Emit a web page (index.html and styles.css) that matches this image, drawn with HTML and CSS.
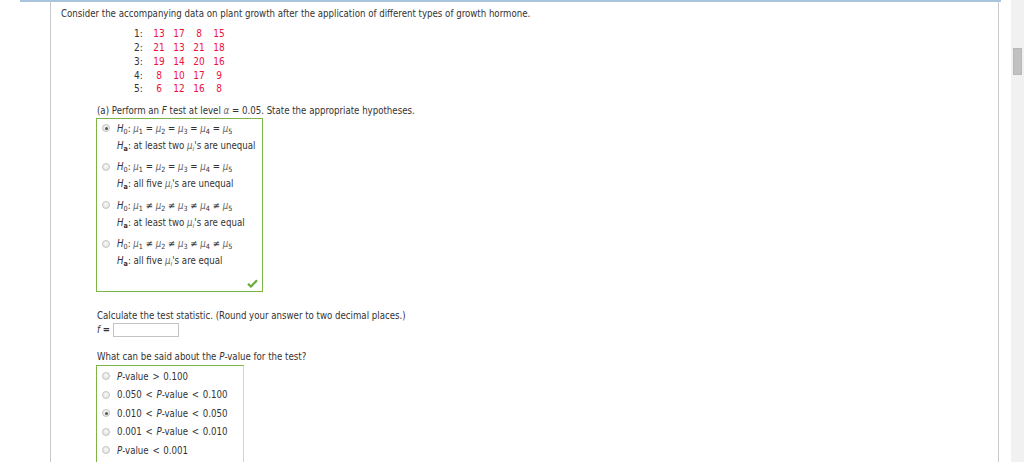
FILE: index.html
```html
<!DOCTYPE html>
<html lang="en">
<head>
  <meta charset="UTF-8" />
  <title>Plant growth ANOVA</title>
  <link rel="stylesheet" href="styles.css">
</head>
<body>

  <div class="page">
    <div class="topline"></div>
    <div class="frame">
      <p class="intro">Consider the accompanying data on plant growth after the application of different types of growth hormone.</p>

      <div class="data">
        <span class="lbl">1:</span><span>13</span><span>17</span><span>8</span><span>15</span>
        <span class="lbl">2:</span><span>21</span><span>13</span><span>21</span><span>18</span>
        <span class="lbl">3:</span><span>19</span><span>14</span><span>20</span><span>16</span>
        <span class="lbl">4:</span><span>8</span><span>10</span><span>17</span><span>9</span>
        <span class="lbl">5:</span><span>6</span><span>12</span><span>16</span><span>8</span>
      </div>

      <div class="part">
        <p class="q">(a) Perform an <i>F</i> test at level <i class="greek">α</i> = 0.05. State the appropriate hypotheses.</p>

        <div class="choices hyp">
          <div class="opt">
            <span class="radio on"></span>
            <div class="lines">
              <div><i>H</i><sub>0</sub>: <i class="mu">μ</i><sub>1</sub> = <i class="mu">μ</i><sub>2</sub> = <i class="mu">μ</i><sub>3</sub> = <i class="mu">μ</i><sub>4</sub> = <i class="mu">μ</i><sub>5</sub></div>
              <div><i>H</i><sub class="b">a</sub>: at least two <i class="mu">μ<sub>i</sub></i>'s are unequal</div>
            </div>
          </div>
          <div class="opt">
            <span class="radio"></span>
            <div class="lines">
              <div><i>H</i><sub>0</sub>: <i class="mu">μ</i><sub>1</sub> = <i class="mu">μ</i><sub>2</sub> = <i class="mu">μ</i><sub>3</sub> = <i class="mu">μ</i><sub>4</sub> = <i class="mu">μ</i><sub>5</sub></div>
              <div><i>H</i><sub class="b">a</sub>: all five <i class="mu">μ<sub>i</sub></i>'s are unequal</div>
            </div>
          </div>
          <div class="opt">
            <span class="radio"></span>
            <div class="lines">
              <div><i>H</i><sub>0</sub>: <i class="mu">μ</i><sub>1</sub> ≠ <i class="mu">μ</i><sub>2</sub> ≠ <i class="mu">μ</i><sub>3</sub> ≠ <i class="mu">μ</i><sub>4</sub> ≠ <i class="mu">μ</i><sub>5</sub></div>
              <div><i>H</i><sub class="b">a</sub>: at least two <i class="mu">μ<sub>i</sub></i>'s are equal</div>
            </div>
          </div>
          <div class="opt">
            <span class="radio"></span>
            <div class="lines">
              <div><i>H</i><sub>0</sub>: <i class="mu">μ</i><sub>1</sub> ≠ <i class="mu">μ</i><sub>2</sub> ≠ <i class="mu">μ</i><sub>3</sub> ≠ <i class="mu">μ</i><sub>4</sub> ≠ <i class="mu">μ</i><sub>5</sub></div>
              <div><i>H</i><sub class="b">a</sub>: all five <i class="mu">μ<sub>i</sub></i>'s are equal</div>
            </div>
          </div>
          <div class="mark">
            <svg width="11" height="9" viewBox="0 0 11 9"><path d="M1 4.8 L4 7.6 L10 1.2" fill="none" stroke="#6aaa3a" stroke-width="2.2" stroke-linejoin="round"/></svg>
          </div>
        </div>

        <p class="q calc">Calculate the test statistic. (Round your answer to two decimal places.)</p>
        <div class="answer"><span><i>f</i> <b>=</b></span><span class="input"></span></div>

        <p class="q pq">What can be said about the <i>P</i>-value for the test?</p>
        <div class="choices pval">
          <div class="popt"><span class="radio"></span><span><i>P</i>-value &gt; 0.100</span></div>
          <div class="popt"><span class="radio"></span><span>0.050 &lt; <i>P</i>-value &lt; 0.100</span></div>
          <div class="popt"><span class="radio on"></span><span>0.010 &lt; <i>P</i>-value &lt; 0.050</span></div>
          <div class="popt"><span class="radio"></span><span>0.001 &lt; <i>P</i>-value &lt; 0.010</span></div>
          <div class="popt"><span class="radio"></span><span><i>P</i>-value &lt; 0.001</span></div>
        </div>
      </div>
    </div>
  </div>

  <div class="scrollbar"><div class="thumb"></div></div>

</body>
</html>
```

FILE: styles.css
```css
html, body {
  height: 462px;
  overflow: hidden;
}

body {
  margin: 0;
  display: flex;
  background: #fff;
  font-family: 'DejaVu Sans Condensed', 'DejaVu Sans', sans-serif;
  font-size: 9.6px;
  color: #333;
}

.page {
  width: 1011px;
}

.topline {
  margin-left: 20px;
  width: 981px;
  height: 2px;
  background: #a9c4dc;
}

.frame {
  margin-left: 50px;
  width: 949px;
  height: 460px;
  border-left: 1px solid #cacaca;
  border-right: 1px solid #cacaca;
  padding: 5px 0 0 10px;
  box-sizing: border-box;
}

p {
  margin: 0;
}

.intro {
  line-height: 13px;
}

.data {
  display: grid;
  grid-template-columns: 15px repeat(4, 20px);
  grid-auto-rows: 13.75px;
  align-items: center;
  margin: 7px 0 0 73px;
  font-size: 10px;
  color: #f0103c;
  text-align: center;
}

.data .lbl {
  color: #333;
  text-align: left;
}

.part {
  margin: 8px 0 0 35px;
}

.q {
  line-height: 14px;
  padding-left: 1px;
}

.greek, .mu {
  color: #666;
}

sub {
  font-size: 75%;
  line-height: 0;
  vertical-align: -2px;
}

sub.b {
  font-weight: bold;
}

.mu sub {
  font-style: italic;
}

.choices {
  border: 1px solid #7cb445;
}

.hyp {
  width: 167px;
  padding-top: 1px;
  box-sizing: border-box;
}

.opt {
  display: flex;
  align-items: flex-start;
  padding-left: 5px;
  margin-bottom: 4.5px;
}

.lines div {
  line-height: 17px;
  white-space: nowrap;
}

.radio {
  width: 8px;
  height: 8px;
  box-sizing: border-box;
  border: 1px solid #c4c4c4;
  border-radius: 50%;
  background: radial-gradient(circle at 50% 40%, #fafafa, #dcdcdc);
  margin: 4.5px 7px 0 0;
  display: flex;
  align-items: center;
  justify-content: center;
  flex-shrink: 0;
}

.radio.on::after {
  content: "";
  width: 3px;
  height: 3px;
  border-radius: 50%;
  background: #555;
}

.mark {
  display: flex;
  justify-content: flex-end;
  align-items: flex-end;
  height: 14px;
  padding: 0 4px 3px 0;
}

.calc {
  margin-top: 17px;
}

.answer {
  display: flex;
  align-items: center;
  height: 14px;
  gap: 3px;
  padding-left: 1px;
}

.input {
  width: 66px;
  height: 14px;
  box-sizing: border-box;
  border: 1px solid #c3c3c3;
  background: #fff;
}

.pq {
  margin-top: 13px;
}

.pval {
  width: 148px;
  box-sizing: border-box;
  border-right-color: #c8e2ab;
  margin-top: 1px;
  padding: 1px 0 20px 0;
}

.popt {
  display: flex;
  align-items: center;
  height: 18.5px;
  padding-left: 5px;
  white-space: nowrap;
  word-spacing: 1px;
}

.popt .radio {
  margin: 0 7px 0 0;
}

.scrollbar {
  width: 13px;
  background: #f1f1f1;
  padding-top: 48px;
}

.thumb {
  width: 9px;
  height: 27px;
  margin-left: 2px;
  background: #c1c1c1;
  border: 1px solid #b8b8b8;
  box-sizing: border-box;
}
```
